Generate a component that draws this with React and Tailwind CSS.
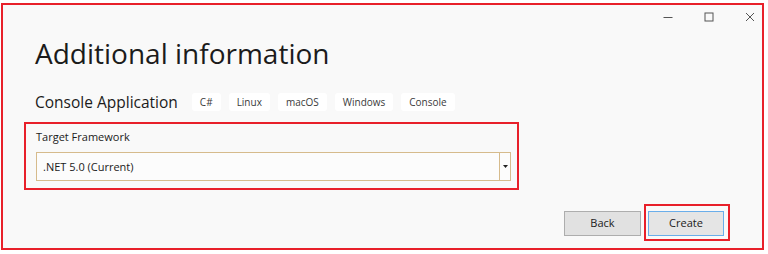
export default function App() {
  const chips = ["C#", "Linux", "macOS", "Windows", "Console"];
  return (
    <div className="h-[254px] w-[768px] bg-white pt-[3px] pl-[1px]" style={{ fontFamily: '"Open Sans", "Noto Sans", sans-serif' }}>
      <div className="flex h-[247px] w-[763px] flex-col border-2 border-[#e8202a] bg-[#f9f9f9]">
        <div className="flex h-[20px] items-center justify-end gap-[31px] pr-[7px] pt-[4px]">
          <svg width="10" height="10" viewBox="0 0 10 10" className="text-[#555]">
            <path d="M0.5 5.5H9.5" stroke="currentColor" strokeWidth="1" />
          </svg>
          <svg width="10" height="10" viewBox="0 0 10 10" className="text-[#555]">
            <rect x="1" y="1" width="8" height="8" fill="none" stroke="currentColor" strokeWidth="1" />
          </svg>
          <svg width="10" height="10" viewBox="0 0 10 10" className="text-[#555]">
            <path d="M1 1L9 9M9 1L1 9" stroke="currentColor" strokeWidth="1" />
          </svg>
        </div>

        <div className="flex flex-1 flex-col px-[21px]">
          <h1 className="mt-[9px] pl-[11px] text-[28px] leading-[38px] text-[#1b1b1b]">Additional information</h1>

          <div className="mt-[19px] flex items-center pl-[11px]">
            <span className="text-[15.5px] leading-[22px] text-[#1b1b1b]">Console Application</span>
            <div className="ml-[14px] flex gap-[8px]">
              {chips.map((c) => (
                <span key={c} className="rounded-[3px] bg-white px-[8px] text-[10px] leading-[18px] text-[#3a3a3a]">
                  {c}
                </span>
              ))}
            </div>
          </div>

          <div className="mt-[9px] w-[495px] border-2 border-[#e8202a] pb-[7px] pl-[10px] pr-[6px] pt-[5px]">
            <p className="text-[11px] leading-[16px] text-[#1b1b1b]">Target Framework</p>
            <div className="mt-[7px] flex h-[29px] border border-[#d6bb8c] bg-[#fcfcfc]">
              <span className="flex-1 pl-[6px] text-[11px] leading-[27px] text-[#1b1b1b]">.NET 5.0 (Current)</span>
              <div className="flex w-[11px] items-center justify-center border-l border-[#d6bb8c]">
                <svg width="5" height="3" viewBox="0 0 5 3">
                  <path d="M0 0H5L2.5 3Z" fill="#222" />
                </svg>
              </div>
            </div>
          </div>

          <div className="mt-[14px] flex items-center justify-end pr-[11px]">
            <button className="mt-[2px] h-[25px] w-[77px] border border-[#adadad] bg-[#e1e1e1] text-[11px] text-[#1b1b1b]">Back</button>
            <div className="ml-[3px] border-2 border-[#e8202a] pb-[3px] pl-[2px] pr-[4px] pt-[5px]">
              <button className="block h-[25px] w-[76px] border border-[#6aaeea] bg-[#e5e5e5] text-[11px] text-[#1b1b1b]">Create</button>
            </div>
          </div>
        </div>
      </div>
    </div>
  );
}
